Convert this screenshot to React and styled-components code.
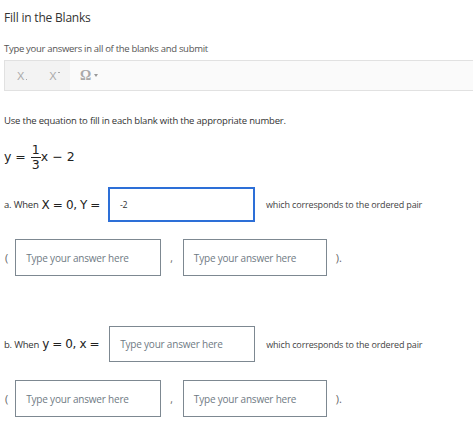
import React from 'react'
import styled, { createGlobalStyle } from 'styled-components'

const Global = createGlobalStyle`
  body {
    margin: 0;
    background: #fff;
    font-family: "Open Sans", "Liberation Sans", sans-serif;
    color: #333;
  }
`

const Page = styled.main`
  width: 473px;
  height: 443px;
  overflow: hidden;
  padding: 0 0 0 4px;
  box-sizing: border-box;
`

const Title = styled.h1`
  margin: 0;
  padding-top: 10px;
  font-size: 12px;
  font-weight: 400;
  color: #333;
  line-height: 16px;
  letter-spacing: -0.2px;
`

const Hint = styled.p`
  margin: 17px 0 0;
  font-size: 9.5px;
  line-height: 12px;
  color: #555;
  letter-spacing: -0.3px;
`

const Toolbar = styled.div`
  margin-top: 5px;
  height: 31px;
  display: flex;
  align-items: center;
  border: 1px solid #e1e1e1;
  border-right: none;
  background: #fafafa;
  box-sizing: border-box;
`

const ToolGroup = styled.div`
  display: flex;
  align-items: center;
  align-self: stretch;
  gap: 25px;
  padding-left: 12px;
  width: 65px;
  box-sizing: border-box;
  background: #f3f3f3;
  color: #aaa;
  font-family: "Liberation Sans", sans-serif;
  font-size: 11px;
`

const Tool = styled.span`
  position: relative;
  display: inline-block;
  white-space: nowrap;
  &::after {
    content: '';
    position: absolute;
    right: -3px;
    top: ${p => (p.$sup ? 2 : 9)}px;
    width: 1.5px;
    height: 1.5px;
    background: #aaa;
  }
`

const Omega = styled.span`
  margin-left: 10px;
  font-family: "Liberation Serif", serif;
  font-size: 14px;
  font-weight: 700;
  color: #a9a9a9;
  display: inline-flex;
  align-items: center;
  &::after {
    content: '';
    margin-left: 3px;
    border-left: 2.5px solid transparent;
    border-right: 2.5px solid transparent;
    border-top: 3px solid #999;
  }
`

const Instruction = styled.p`
  margin: 24px 0 0;
  font-size: 9.5px;
  line-height: 12px;
  color: #333;
  letter-spacing: -0.2px;
`

const Equation = styled.div`
  margin-top: 11px;
  display: flex;
  align-items: center;
  font-family: "DejaVu Sans", sans-serif;
  font-size: 12.5px;
  color: #222;
  height: 36px;
`

const Frac = styled.span`
  display: inline-flex;
  flex-direction: column;
  align-items: center;
  font-size: 12.5px;
  line-height: 14px;
  margin: 2px 0 0 5px;
  span:first-child {
    border-bottom: 1px solid #222;
    padding: 0 1px 0;
  }
`

const Row = styled.div`
  display: flex;
  align-items: center;
  margin-top: ${p => p.$top}px;
  color: #333;
`

const Label = styled.span`
  font-size: 9.5px;
  letter-spacing: -0.2px;
  white-space: nowrap;
`

const Math = styled.span`
  font-family: "DejaVu Sans", sans-serif;
  font-size: 12px;
  color: #222;
  margin-left: 3px;
  letter-spacing: -0.4px;
  white-space: nowrap;
`

const Blank = styled.div`
  box-sizing: border-box;
  width: ${p => p.$w || 146}px;
  height: ${p => p.$h || 36}px;
  margin-left: ${p => p.$ml}px;
  border: ${p => (p.$active ? '2px solid #2d6fd7' : '1px solid #7d8891')};
  padding-left: 10px;
  display: flex;
  align-items: center;
  font-size: ${p => (p.$filled ? 8.8 : 10)}px;
  color: ${p => (p.$filled ? '#333' : '#6f7a84')};
  letter-spacing: -0.2px;
  white-space: nowrap;
`

const Trail = styled.span`
  margin-left: ${p => p.$ml}px;
  color: #444;
  font-size: 9px;
  letter-spacing: -0.15px;
  white-space: nowrap;
`

const Paren = styled.span`
  font-size: 11px;
  color: #666;
  margin-left: ${p => p.$ml || 1}px;
`

const Comma = styled.span`
  color: #666;
  font-size: 10px;
  margin-left: 9px;
`

const PairRow = ({ top }) => (
  <Row $top={top}>
    <Paren>(</Paren>
    <Blank $ml={7} $w={146} $h={37}>Type your answer here</Blank>
    <Comma>,</Comma>
    <Blank $ml={10} $w={144} $h={37}>Type your answer here</Blank>
    <Paren $ml={9}>).</Paren>
  </Row>
)

export default function App() {
  return (
    <>
      <Global />
      <Page>
        <Title>Fill in the Blanks</Title>
        <Hint>Type your answers in all of the blanks and submit</Hint>
        <Toolbar>
          <ToolGroup>
            <Tool>X</Tool>
            <Tool $sup>X</Tool>
          </ToolGroup>
          <Omega>Ω</Omega>
        </Toolbar>
        <Instruction>Use the equation to fill in each blank with the appropriate number.</Instruction>
        <Equation>
          y =<Frac><span>1</span><span>3</span></Frac>x − 2
        </Equation>
        <Row $top={13}>
          <Label>a. When</Label>
          <Math>X = 0, Y =</Math>
          <Blank $ml={8} $w={147} $h={35} $active $filled>-2</Blank>
          <Trail $ml={11}>which corresponds to the ordered pair</Trail>
        </Row>
        <PairRow top={17} />
        <Row $top={50}>
          <Label>b. When</Label>
          <Math>y = 0, x =</Math>
          <Blank $ml={10} $w={146} $h={36}>Type your answer here</Blank>
          <Trail $ml={11}>which corresponds to the ordered pair</Trail>
        </Row>
        <PairRow top={18} />
      </Page>
    </>
  )
}
